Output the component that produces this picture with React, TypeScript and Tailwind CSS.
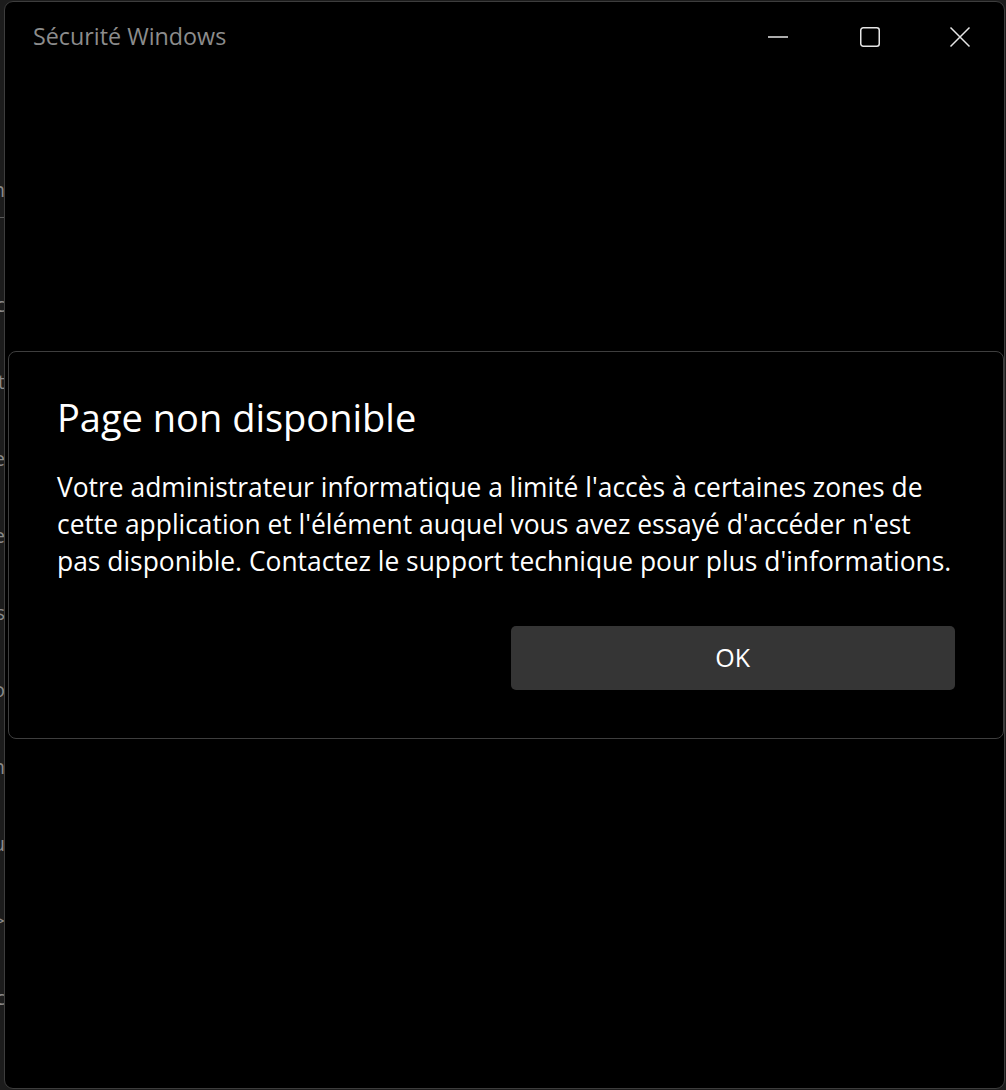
import React from "react";

const FONT = { fontFamily: '"Open Sans", "Noto Sans", "Liberation Sans", sans-serif' };

// letters of the window behind, cut off by the left edge
const behind = ["c", "t", "e", "e", "s", "o", "n", "u", ">", "c"];

function BehindStrip() {
    return (
        <div className="w-[4px] shrink-0 overflow-hidden flex flex-col items-end pt-[170px]">
            <span className="block h-[40px] text-[20px] leading-[40px] text-[#8a8a8a] -mr-[1px]">n</span>
            <div className="mt-[7px] w-[4px] h-px shrink-0 bg-[#5a5a5a]" />
            <div className="mt-[67px] flex flex-col items-end">
                {behind.map((ch, i) => (
                    <div key={i} className="h-[77px] shrink-0">
                        <span className="block h-[40px] text-[20px] leading-[40px] text-[#8a8a8a] -mr-[1px]">{ch}</span>
                    </div>
                ))}
            </div>
        </div>
    );
}

function TitleBar() {
    return (
        <div className="h-[70px] flex items-center justify-between pl-[28px]">
            <span className="text-[23.3px] text-[#8c8c8c] -mt-[1px]">Sécurité Windows</span>
            <div className="flex h-full">
                <div className="w-[92px] flex items-center justify-center">
                    <svg width="22" height="22" viewBox="0 0 22 22" fill="none" stroke="#e6e6e6" strokeWidth="1.5">
                        <path d="M1 11h20" />
                    </svg>
                </div>
                <div className="w-[92px] flex items-center justify-center">
                    <svg width="22" height="22" viewBox="0 0 22 22" fill="none" stroke="#e6e6e6" strokeWidth="1.5">
                        <rect x="1.75" y="1.75" width="18.5" height="18.5" rx="2.5" />
                    </svg>
                </div>
                <div className="w-[88px] flex items-center justify-center">
                    <svg width="22" height="22" viewBox="0 0 22 22" fill="none" stroke="#e6e6e6" strokeWidth="1.5">
                        <path d="M1.5 1.5l19 19M20.5 1.5l-19 19" />
                    </svg>
                </div>
            </div>
        </div>
    );
}

export default function App() {
    return (
        <div className="w-[1006px] h-[1090px] bg-[#1c1c1c] flex overflow-hidden" style={FONT}>
            <BehindStrip />
            <div className="w-[1001px] h-[1088px] mt-[1px] border border-[#3d3d3d] rounded-[9px] bg-black flex flex-col">
                <TitleBar />
                <div className="pt-[279px] pl-[3px]">
                    <div className="border border-[#3e3e3e] rounded-[8px] bg-black px-[48px] pt-[41px] pb-[48px]">
                        <h1 className="text-[38px] leading-[48px] text-white">Page non disponible</h1>
                        <p className="mt-[28px] text-[26.4px] leading-[37px] text-white whitespace-nowrap">
                            Votre administrateur informatique a limité l'accès à certaines zones de
                            <br />
                            cette application et l'élément auquel vous avez essayé d'accéder n'est
                            <br />
                            pas disponible. Contactez le support technique pour plus d'informations.
                        </p>
                        <div className="mt-[46px] grid grid-cols-2 gap-[9px]">
                            <div />
                            <button className="h-[64px] rounded-[5px] bg-[#353535] text-white text-[25px]">OK</button>
                        </div>
                    </div>
                </div>
            </div>
        </div>
    );
}
